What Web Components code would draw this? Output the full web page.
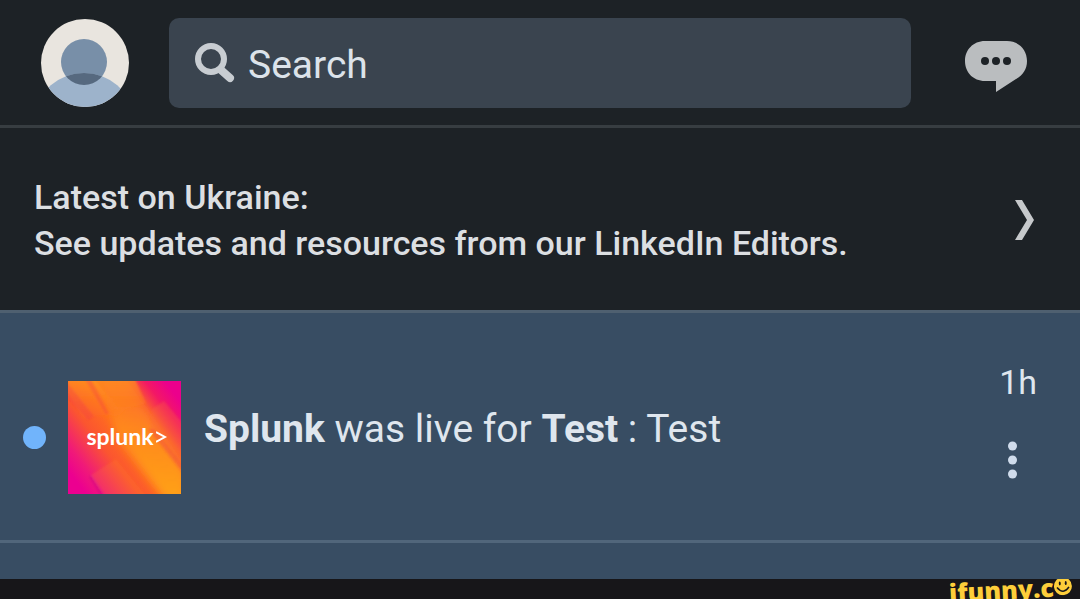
<!DOCTYPE html>
<html lang="en">
<head>
<meta charset="utf-8">
<meta name="viewport" content="width=device-width, initial-scale=1">
<title>Notifications</title>
<style>
  body {
    margin: 0;
    background: #1d2226;
    font-family: Roboto, "Liberation Sans", sans-serif;
  }
</style>
</head>
<body>
<notifications-page>
  <top-bar slot="header"></top-bar>
  <news-banner href="#ukraine">
    <span slot="title">Latest on Ukraine:</span>
    See updates and resources from our LinkedIn Editors.
  </news-banner>
  <notification-item time="1h" unread>
    <splunk-logo slot="logo"></splunk-logo>
    <b>Splunk</b> was live for <b>Test</b> : Test
  </notification-item>
  <site-watermark slot="footer">ifunny.c</site-watermark>
</notifications-page>

<script>
function define(name, html, setup) {
  const template = document.createElement('template');
  template.innerHTML = html;

  customElements.define(name, class extends HTMLElement {
    constructor() {
      super();
      this.attachShadow({ mode: 'open' });
      this.shadowRoot.appendChild(template.content.cloneNode(true));
    }

    connectedCallback() {
      if (setup) setup(this, this.shadowRoot);
    }
  });
}

define('notifications-page', `
  <style>
    :host {
      display: flex;
      flex-direction: column;
      min-height: 100vh;
      color: #dde1e5;
    }

    main {
      display: flex;
      flex-direction: column;
      flex: 1;
      background: #384d63;
    }
  </style>
  <slot name="header"></slot>
  <main><slot></slot></main>
  <slot name="footer"></slot>
`);

define('user-avatar', `
  <style>
    :host { display: block; }
    button {
      display: block;
      width: 88px;
      height: 88px;
      padding: 0;
      border: 0;
      border-radius: 50%;
      overflow: hidden;
      background: #e9e5df;
      cursor: pointer;
    }
    svg { display: block; }
  </style>
  <button aria-label="Profile">
    <svg width="88" height="88" viewBox="0 0 88 88">
      <defs><clipPath id="head"><circle cx="43" cy="43" r="23"/></clipPath></defs>
      <circle cx="43" cy="43" r="23" fill="#788fa8"/>
      <ellipse cx="43" cy="96" rx="47" ry="42" fill="#9db3cb"/>
      <ellipse cx="43" cy="96" rx="47" ry="42" fill="#56697f" clip-path="url(#head)"/>
    </svg>
  </button>
`);

define('search-box', `
  <style>
    :host { display: block; }

    label {
      display: flex;
      align-items: center;
      gap: 12px;
      height: 90px;
      padding: 0 24px;
      box-sizing: border-box;
      border-radius: 10px;
      background: #3a444f;
    }

    svg { flex: none; }

    input {
      flex: 1;
      min-width: 0;
      height: 48px;
      margin-top: 4px;
      padding: 0;
      border: 0;
      outline: 0;
      background: none;
      color: #e0e6ed;
      font: 39px Roboto, "Liberation Sans", sans-serif;
    }

    input::placeholder { color: #dce3ea; opacity: 1; }
  </style>
  <label>
    <svg width="43" height="42" viewBox="0 0 43 42" fill="none" stroke="#c8cdd2">
      <circle cx="18" cy="17" r="13" stroke-width="6"/>
      <path d="M28 28 L37 36" stroke-width="8" stroke-linecap="round"/>
    </svg>
    <input type="text" placeholder="Search" aria-label="Search">
  </label>
`);

define('top-bar', `
  <style>
    :host {
      display: flex;
      align-items: center;
      height: 125px;
      padding: 0 53px 0 41px;
      border-bottom: 3px solid #373d41;
      background: #1d2226;
    }

    search-box { flex: 1; margin: 0 54px 0 40px; }

    .messages {
      padding: 8px 0 0;
      border: 0;
      background: none;
      cursor: pointer;
    }
    .messages svg { display: block; }
  </style>
  <user-avatar></user-avatar>
  <search-box></search-box>
  <button class="messages" aria-label="Messaging">
    <svg width="62" height="52" viewBox="0 0 62 52">
      <path d="M20 0 H42 C54 0 62 9 62 20 C62 28 58 34 51 38 L31 51 V40 H20 C8 40 0 31 0 20 C0 9 8 0 20 0 Z" fill="#babdbf"/>
      <g fill="#1d2226">
        <circle cx="20" cy="20" r="4"/>
        <circle cx="31" cy="20" r="4"/>
        <circle cx="42" cy="20" r="4"/>
      </g>
    </svg>
  </button>
`);

define('news-banner', `
  <style>
    :host { display: block; }

    a {
      display: flex;
      align-items: center;
      justify-content: space-between;
      height: 180px;
      padding: 2px 45px 0 34px;
      border-bottom: 3px solid #4f6070;
      background: #1d2226;
      color: #dcdfe2;
      font-size: 34px;
      font-weight: 500;
      line-height: 46px;
      text-decoration: none;
    }

    .title { display: block; }
    svg { flex: none; }
  </style>
  <a>
    <span><span class="title"><slot name="title"></slot></span><slot></slot></span>
    <svg width="21" height="40" viewBox="0 0 21 40">
      <path d="M1 0 H8 L20 20 L8 40 H1 L13 20 Z" fill="#c6c9cb"/>
    </svg>
  </a>
`, (el, root) => {
  root.querySelector('a').href = el.getAttribute('href') || '#';
});

define('splunk-logo', `
  <style>
    :host {
      display: grid;
      width: 113px;
      height: 113px;
      overflow: hidden;
    }

    svg, .name { grid-area: 1 / 1; }

    .name {
      display: flex;
      align-items: center;
      justify-content: center;
      gap: 2px;
      padding: 0 0 4px 4px;
      color: #fff;
      font: 700 23px/28px Lato, sans-serif;
      z-index: 1;
    }
  </style>
  <svg width="113" height="113" viewBox="0 0 113 113">
    <defs>
      <linearGradient id="base" gradientUnits="userSpaceOnUse" x1="2" y1="92" x2="106" y2="12">
        <stop offset="0" stop-color="#ec0090"/>
        <stop offset=".12" stop-color="#f01a78"/>
        <stop offset=".32" stop-color="#fb5530"/>
        <stop offset=".52" stop-color="#ff701d"/>
        <stop offset=".76" stop-color="#fb5d30"/>
        <stop offset=".88" stop-color="#f31865"/>
        <stop offset="1" stop-color="#ec008c"/>
      </linearGradient>
      <linearGradient id="glow" x1="0" y1="0" x2="0" y2="1">
        <stop offset="0" stop-color="#ff8a1c" stop-opacity=".3"/>
        <stop offset=".5" stop-color="#ff951c" stop-opacity=".8"/>
        <stop offset="1" stop-color="#ffa313"/>
      </linearGradient>
      <linearGradient id="streak" x1="0" y1="0" x2="0" y2="1">
        <stop offset="0" stop-color="#ff9a20" stop-opacity=".7"/>
        <stop offset="1" stop-color="#ff7a20" stop-opacity=".1"/>
      </linearGradient>
      <filter id="soft"><feGaussianBlur stdDeviation="4"/></filter>
      <filter id="edge"><feGaussianBlur stdDeviation="1"/></filter>
    </defs>
    <rect width="113" height="113" fill="url(#base)"/>
    <path d="M35 0 H60 L118 92 V120 H98 L48 55 Z" fill="url(#glow)" filter="url(#soft)"/>
    <g filter="url(#edge)">
      <path d="M0 -4 H24 L54 31 L40 38 L26 34 L16 38 L0 12 Z" fill="url(#streak)"/>
      <path d="M22 -4 H66 L78 22 L58 28 L48 38 Z" fill="url(#streak)"/>
      <path d="M-2 0 L26 35 L20 39 L-2 15 Z M16 -3 L38 34 L41 32 L22 -3 Z" fill="#ef2a55" opacity=".25"/>
      <path d="M23 94 L48 78 L78 115 H38 Z" fill="#ff8a20" opacity=".2"/>
      <path d="M23 94 L36 115 H32 L21 96 Z" fill="#c70084" opacity=".4"/>
      <path d="M84 28 L96 20 L115 43 V88 L82 48 Z" fill="#fa6a35" opacity=".3"/>
      <path d="M86 48 L115 84 V92 L80 48 Z" fill="#ee3a45" opacity=".3"/>
    </g>
  </svg>
  <div class="name"><span>splunk</span><svg width="11" height="14" viewBox="0 0 11 14" fill="none" stroke="#fff" stroke-width="2"><path d="M0 3 L9 8 L0 13"/></svg></div>
`);

define('notification-item', `
  <style>
    :host {
      display: flex;
      height: 227px;
      padding: 0 43px 0 23px;
      border-bottom: 3px solid #51667b;
      background: #384d63;
      color: #dfe6ee;
    }

    .lead {
      display: flex;
      align-items: center;
      gap: 22px;
      padding-top: 22px;
    }

    .dot {
      width: 23px;
      height: 23px;
      border-radius: 50%;
      background: #71b4fb;
      visibility: hidden;
    }
    :host([unread]) .dot { visibility: visible; }

    p {
      flex: 1;
      align-self: center;
      margin: 0;
      padding: 4px 23px 0;
      font-size: 39px;
      line-height: 46px;
    }

    .side {
      display: flex;
      flex-direction: column;
      gap: 36px;
      padding-top: 47px;
    }

    time { font-size: 34px; line-height: 44px; }

    button {
      align-self: flex-start;
      padding: 0 9px;
      border: 0;
      background: none;
      cursor: pointer;
    }
    button svg { display: block; }
  </style>
  <div class="lead">
    <span class="dot"></span>
    <slot name="logo"></slot>
  </div>
  <p><slot></slot></p>
  <div class="side">
    <time></time>
    <button aria-label="More options">
      <svg width="9" height="40" viewBox="0 0 9 40" fill="#d0dcec">
        <circle cx="4.500" cy="6" r="4.500"/>
        <circle cx="4.500" cy="20" r="4.500"/>
        <circle cx="4.500" cy="34" r="4.500"/>
      </svg>
    </button>
  </div>
`, (el, root) => {
  root.querySelector('time').textContent = el.getAttribute('time');
});

define('site-watermark', `
  <style>
    :host {
      display: flex;
      justify-content: flex-end;
      height: 20px;
      padding-right: 8px;
      overflow: hidden;
      background: #171619;
      color: #fdce3a;
    }

    .mark {
      display: flex;
      align-items: center;
      height: 20px;
      font: 800 25px/20px "Open Sans", sans-serif;
      transform: rotate(-3deg);
    }
  </style>
  <div class="mark">
    <slot></slot>
    <svg width="18" height="18" viewBox="0 0 18 18">
      <circle cx="9" cy="9" r="9" fill="#fdce3a"/>
      <ellipse cx="6" cy="6" rx="1" ry="2" fill="#171619"/>
      <ellipse cx="12" cy="6" rx="1" ry="2" fill="#171619"/>
      <path d="M3 10 Q9 18 15 10" fill="none" stroke="#171619" stroke-width="1.500"/>
    </svg>
  </div>
`);
</script>
</body>
</html>
